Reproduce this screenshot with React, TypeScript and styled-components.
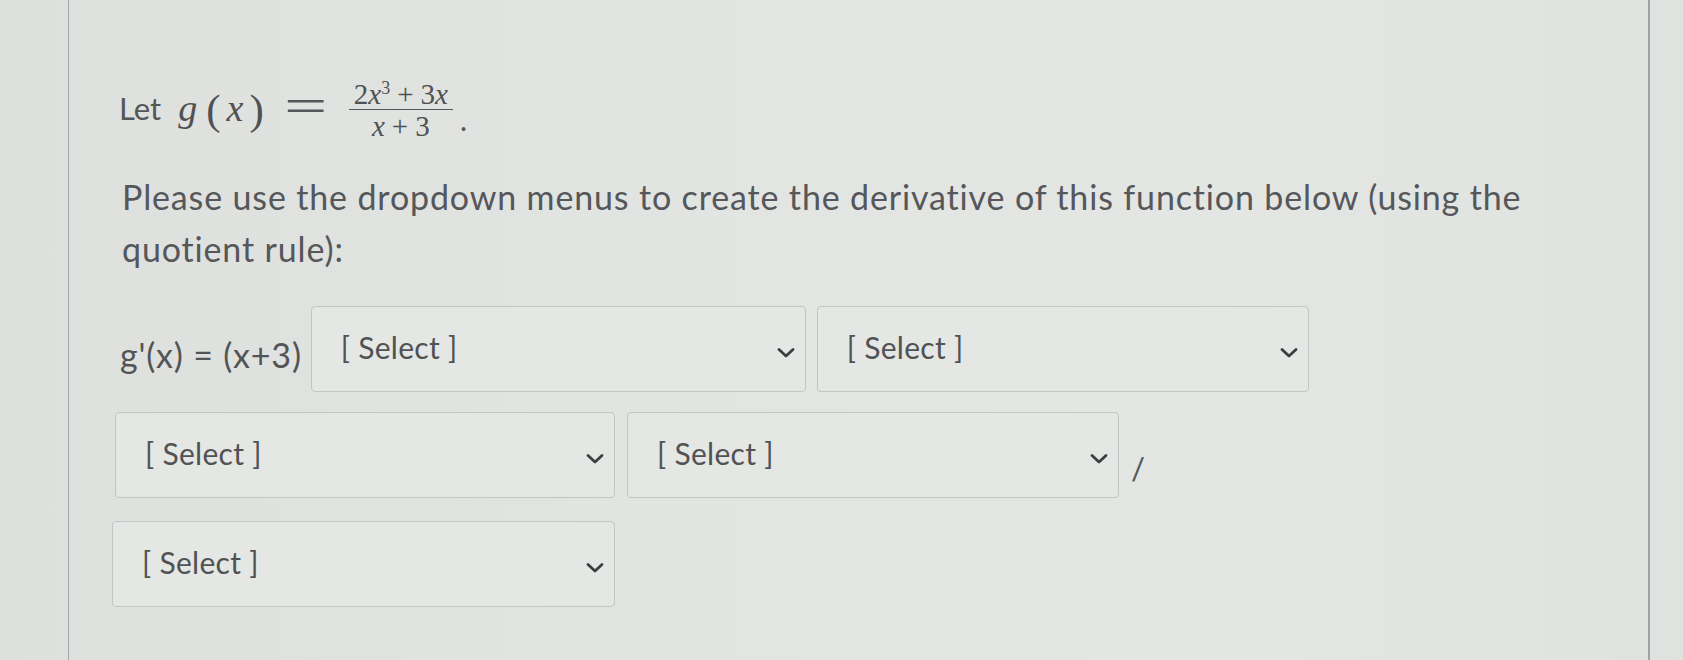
import React from "react";
import styled, { createGlobalStyle } from "styled-components";

const Global = createGlobalStyle`
  html, body { margin: 0; padding: 0; background: #e0e3e0; }
  body { font-family: Lato, "Open Sans", sans-serif; color: #525456; }
`;

const Page = styled.div`
  width: 1683px;
  height: 660px;
  box-sizing: border-box;
  padding-left: 68px;
  padding-right: 33px;
  display: flex;
  background: linear-gradient(90deg, #dde0dd 0%, #e2e5e2 45%, #e3e6e3 75%, #dfe2df 100%);
  overflow: hidden;
`;

const Panel = styled.div`
  flex: 1;
  border-left: 1.5px solid #a3a9ab;
  border-right: 2px solid #9ea3a3;
  padding: 80px 0 0 47px;
  box-sizing: border-box;
`;

const FormulaLine = styled.div`
  display: flex;
  align-items: center;
  height: 60px;
  margin-left: 3px;
  color: #545658;
`;

const Word = styled.span`
  font-size: 31px;
  margin-right: 17px;
  margin-bottom: 4px;
`;

const MathVar = styled.span<{ gap?: number }>`
  font-family: "Liberation Serif", "DejaVu Serif", serif;
  font-style: italic;
  font-size: 38px;
  margin: 0 ${(p) => p.gap ?? 0}px 4px;
  color: #4f5153;
`;

const Paren = styled.span<{ ml?: number }>`
  font-family: "Liberation Serif", serif;
  font-size: 43px;
  margin-left: ${(p) => p.ml ?? 0}px;
  margin-bottom: 2px;
  color: #4f5153;
`;

const Equals = styled.span`
  display: inline-block;
  font-family: "Liberation Serif", serif;
  font-size: 48px;
  line-height: 1;
  transform: scaleX(1.6);
  margin: 0 30px 9px 28px;
  color: #55575a;
`;

const Fraction = styled.span`
  display: inline-flex;
  flex-direction: column;
  align-items: center;
  font-family: "Liberation Serif", serif;
  font-size: 29px;
  color: #4f5153;
`;

const Numer = styled.span`
  padding: 0 5px 1px;
  border-bottom: 1.8px solid #55575a;
  line-height: 27px;
`;

const Denom = styled.span`
  padding-top: 3px;
  line-height: 27px;
`;

const Op = styled.span`
  margin: 0 7px;
`;

const Sup = styled.sup`
  font-size: 18px;
  vertical-align: 10px;
  line-height: 0;
`;

const Period = styled.span`
  font-size: 30px;
  margin-left: 7px;
  margin-top: 18px;
`;

const Instruction = styled.p`
  margin: 31px 0 0 6px;
  font-size: 34px;
  letter-spacing: 0.85px;
  line-height: 52px;
  color: #55575a;
  max-width: 1460px;
`;

const Row = styled.div<{ top: number; left?: number }>`
  display: flex;
  align-items: center;
  margin-top: ${(p) => p.top}px;
  margin-left: ${(p) => p.left ?? 0}px;
`;

const Label = styled.span`
  font-size: 34px;
  letter-spacing: 0.8px;
  color: #525456;
  margin: 10px 9px 0 4px;
`;

const SelectBox = styled.div<{ w: number; gap?: number }>`
  width: ${(p) => p.w}px;
  height: 86px;
  margin-right: ${(p) => p.gap ?? 0}px;
  box-sizing: border-box;
  border: 1.5px solid #c2c5c3;
  border-radius: 4px;
  background: #e4e7e4;
  display: flex;
  align-items: center;
  justify-content: space-between;
  padding: 0 9px 0 29px;
`;

const SelectText = styled.span`
  font-size: 30px;
  letter-spacing: 0.3px;
  color: #505254;
  margin-bottom: 4px;
`;

const Chevron = styled.svg`
  width: 20px;
  height: 12px;
  margin-top: 8px;
`;

const Slash = styled.span`
  font-size: 31px;
  color: #55575a;
  margin-left: 12px;
  margin-top: 26px;
`;

function Select({ w, gap }: { w: number; gap?: number }) {
  return (
    <SelectBox w={w} gap={gap}>
      <SelectText>[ Select ]</SelectText>
      <Chevron viewBox="0 0 20 12">
        <path d="M3 2.5 L10 9 L17 2.5" fill="none" stroke="#3c3e40" strokeWidth="2.8" strokeLinecap="round" strokeLinejoin="round" />
      </Chevron>
    </SelectBox>
  );
}

export default function App() {
  return (
    <>
      <Global />
      <Page>
        <Panel>
          <FormulaLine>
            <Word>Let</Word>
            <MathVar>g</MathVar>
            <Paren ml={9}>(</Paren>
            <MathVar gap={6}>x</MathVar>
            <Paren>)</Paren>
            <Equals>=</Equals>
            <Fraction>
              <Numer>
                2<i>x</i>
                <Sup>3</Sup>
                <Op>+</Op>3<i>x</i>
              </Numer>
              <Denom>
                <i>x</i>
                <Op>+</Op>3
              </Denom>
            </Fraction>
            <Period>.</Period>
          </FormulaLine>
          <Instruction>
            Please use the dropdown menus to create the derivative of this function below (using the quotient rule):
          </Instruction>
          <Row top={31}>
            <Label>g'(x) = (x+3)</Label>
            <Select w={495} gap={11} />
            <Select w={492} />
          </Row>
          <Row top={20} left={-1}>
            <Select w={500} gap={12} />
            <Select w={492} />
            <Slash>/</Slash>
          </Row>
          <Row top={23} left={-4}>
            <Select w={503} />
          </Row>
        </Panel>
      </Page>
    </>
  );
}
